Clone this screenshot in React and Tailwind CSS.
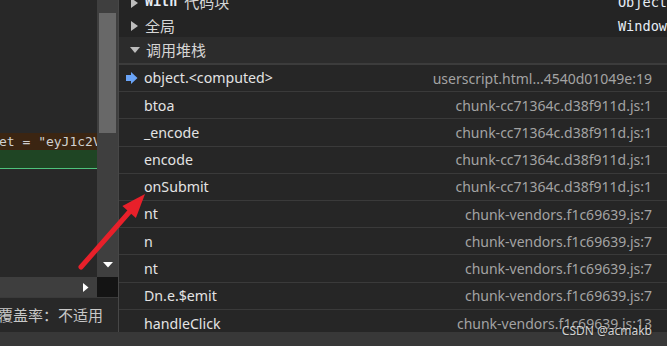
import React from "react";

const sans = { fontFamily: '"Noto Sans", "Open Sans", "Noto Sans CJK SC", sans-serif' };
const cjk = { fontFamily: '"Noto Sans CJK SC", "Noto Sans", sans-serif' };
const mono = { fontFamily: '"DejaVu Sans Mono", "Liberation Mono", monospace' };

const frames = [
  ["object.<computed>", "userscript.html...4540d01049e:19", true],
  ["btoa", "chunk-cc71364c.d38f911d.js:1"],
  ["_encode", "chunk-cc71364c.d38f911d.js:1"],
  ["encode", "chunk-cc71364c.d38f911d.js:1"],
  ["onSubmit", "chunk-cc71364c.d38f911d.js:1"],
  ["nt", "chunk-vendors.f1c69639.js:7"],
  ["n", "chunk-vendors.f1c69639.js:7"],
  ["nt", "chunk-vendors.f1c69639.js:7"],
  ["Dn.e.$emit", "chunk-vendors.f1c69639.js:7"],
  ["handleClick", "chunk-vendors.f1c69639.js:13"],
];

function RightTri() {
  return (
    <svg width="7" height="10" viewBox="0 0 7 10">
      <polygon points="0,0 7,5 0,10" fill="#bdbdbd" />
    </svg>
  );
}

function DownTri() {
  return (
    <svg width="10" height="7" viewBox="0 0 10 7">
      <polygon points="0,0 10,0 5,6" fill="#bdbdbd" />
    </svg>
  );
}

function BlueArrow() {
  return (
    <svg width="12" height="12" viewBox="0 0 12 12">
      <polygon points="0,3 5,3 5,0 11.5,6 5,12 5,9 0,9" fill="#6aa4f7" />
    </svg>
  );
}

export default function App() {
  return (
    <div className="relative w-[667px] h-[346px] overflow-hidden bg-[#242424] flex flex-col">
      <div className="flex h-[332px]">
        {/* Left panel */}
        <div className="w-[118px] flex flex-col bg-[#282828]">
          <div className="h-[277px] flex">
            <div className="w-[97px] overflow-hidden flex flex-col">
              <div className="h-[133px]" />
              <div className="h-[17px] bg-[#3b2512] flex items-center overflow-hidden">
                <span
                  className="text-[13px] text-[#d0d0d0] whitespace-pre -ml-[1px] leading-none"
                  style={mono}
                >
                  et = "eyJ1c2VyIjoi
                </span>
              </div>
              <div className="h-[19px] bg-[#1f4524] border-b border-[#4ec27c]" />
            </div>
            <div className="w-[21px] bg-[#3f3f3f] flex flex-col items-center">
              <div className="mt-[13px] w-[17px] h-[120px] bg-[#686868]" />
              <div className="flex-1" />
              <svg width="10" height="6" viewBox="0 0 10 6" className="mb-[9px]">
                <polygon points="0,0 10,0 5,5.5" fill="#ffffff" />
              </svg>
            </div>
          </div>
          <div className="h-[20px] flex">
            <div className="w-[97px] bg-[#3e3e3e] flex items-center justify-end pr-[8px]">
              <svg width="6" height="9" viewBox="0 0 6 9">
                <polygon points="0,0 5.5,4.5 0,9" fill="#ffffff" />
              </svg>
            </div>
            <div className="w-[21px] bg-[#141414]" />
          </div>
          <div className="flex-1 border-t border-[#3a3a3a] flex items-center overflow-hidden">
            <span className="text-[15px] text-[#c8c8c8] whitespace-nowrap -ml-[2px]" style={cjk}>
              覆盖率：不适用
            </span>
          </div>
        </div>
        <div className="w-px bg-[#474747]" />
        {/* Right panel */}
        <div className="flex-1 flex flex-col overflow-hidden bg-[#242424]">
          <div className="-mt-[10px] h-[25px] shrink-0 flex items-center">
            <div className="w-[501px] flex items-center pl-[12px]">
              <RightTri />
              <span className="ml-[7px] text-[13.4px] font-bold text-[#e6ecf5]" style={mono}>
                With
              </span>
              <span className="ml-[7px] text-[15px] text-[#d6d6d6]" style={cjk}>
                代码块
              </span>
            </div>
            <span className="text-[13.6px] text-[#e6ecf5] whitespace-nowrap" style={mono}>
              Object
            </span>
          </div>
          <div className="h-[22px] shrink-0 flex items-center">
            <div className="w-[501px] flex items-center pl-[12px]">
              <RightTri />
              <span className="ml-[7px] text-[15px] text-[#d6d6d6]" style={cjk}>
                全局
              </span>
            </div>
            <span className="text-[13.6px] text-[#e6ecf5] whitespace-nowrap" style={mono}>
              Window
            </span>
          </div>
          <div className="h-[26px] shrink-0 bg-[#2c2c2c] flex items-center pl-[11px]">
            <DownTri />
            <span className="ml-[6px] text-[15px] text-[#d6d6d6]" style={cjk}>
              调用堆栈
            </span>
          </div>
          <div className="h-[2px] shrink-0 bg-[#3c3c3c]" />
          <div className="flex flex-col divide-y divide-[#3a3a3a]">
            {frames.map(([name, file, cur], i) => (
              <div
                key={i}
                className="h-[27.2px] shrink-0 flex items-center justify-between pr-[15px] bg-[#262626]"
                style={sans}
              >
                <div className="flex items-center">
                  <div className="w-[25px] flex justify-end pr-[6px]">
                    {cur ? <BlueArrow /> : null}
                  </div>
                  <span className="text-[14.2px] text-[#e3e3e3] whitespace-nowrap">{name}</span>
                </div>
                <span className="text-[14px] text-[#a3a3a3] whitespace-nowrap">{file}</span>
              </div>
            ))}
          </div>
        </div>
      </div>
      <div className="flex-1 bg-[#383838]" />

      {/* watermark */}
      <div
        className="absolute right-[15px] bottom-[9px] text-[12px] leading-none text-white/80 whitespace-nowrap"
        style={{ ...sans, textShadow: "0 0 2px rgba(0,0,0,0.8)" }}
      >
        CSDN @acmakb
      </div>

      {/* red annotation arrow */}
      <svg className="absolute left-0 top-0 pointer-events-none" width="667" height="346">
        <line x1="81" y1="267" x2="132" y2="209" stroke="#e8202a" strokeWidth="5" strokeLinecap="round" />
        <polygon points="145,194 122.4,206.1 135.9,217.9" fill="#e8202a" />
      </svg>
    </div>
  );
}
